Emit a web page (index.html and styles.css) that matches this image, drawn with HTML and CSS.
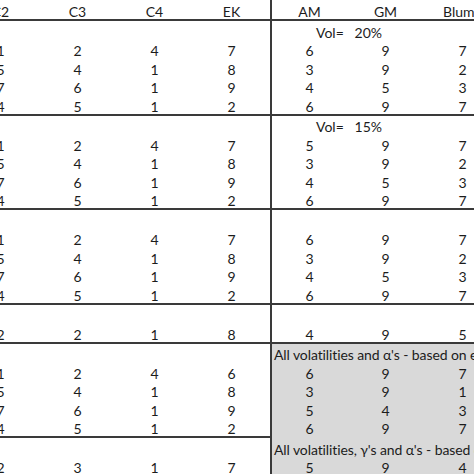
FILE: index.html
```html
<!DOCTYPE html>
<html>
<head>
<meta charset="utf-8">
<link rel="stylesheet" href="styles.css">
</head>
<body>
<div class="sheet">
  <div class="section head">
    <div class="row">
      <div class="c">C2</div><div class="c">C3</div><div class="c">C4</div><div class="c">EK</div>
      <div class="c r">AM</div><div class="c">GM</div><div class="c">Blume</div>
    </div>
  </div>

  <div class="section">
    <div class="row"><div class="c"></div><div class="c"></div><div class="c"></div><div class="c"></div><div class="c r title vol">Vol=   20%</div></div>
    <div class="row"><div class="c">1</div><div class="c">2</div><div class="c">4</div><div class="c">7</div><div class="c r">6</div><div class="c">9</div><div class="c">7</div></div>
    <div class="row"><div class="c">5</div><div class="c">4</div><div class="c">1</div><div class="c">8</div><div class="c r">3</div><div class="c">9</div><div class="c">2</div></div>
    <div class="row"><div class="c">7</div><div class="c">6</div><div class="c">1</div><div class="c">9</div><div class="c r">4</div><div class="c">5</div><div class="c">3</div></div>
    <div class="row"><div class="c">4</div><div class="c">5</div><div class="c">1</div><div class="c">2</div><div class="c r">6</div><div class="c">9</div><div class="c">7</div></div>
  </div>

  <div class="section">
    <div class="row"><div class="c"></div><div class="c"></div><div class="c"></div><div class="c"></div><div class="c r title vol">Vol=   15%</div></div>
    <div class="row"><div class="c">1</div><div class="c">2</div><div class="c">4</div><div class="c">7</div><div class="c r">5</div><div class="c">9</div><div class="c">7</div></div>
    <div class="row"><div class="c">5</div><div class="c">4</div><div class="c">1</div><div class="c">8</div><div class="c r">3</div><div class="c">9</div><div class="c">2</div></div>
    <div class="row"><div class="c">7</div><div class="c">6</div><div class="c">1</div><div class="c">9</div><div class="c r">4</div><div class="c">5</div><div class="c">3</div></div>
    <div class="row"><div class="c">4</div><div class="c">5</div><div class="c">1</div><div class="c">2</div><div class="c r">6</div><div class="c">9</div><div class="c">7</div></div>
  </div>

  <div class="section">
    <div class="row"><div class="c"></div><div class="c"></div><div class="c"></div><div class="c"></div><div class="c r title"></div></div>
    <div class="row"><div class="c">1</div><div class="c">2</div><div class="c">4</div><div class="c">7</div><div class="c r">6</div><div class="c">9</div><div class="c">7</div></div>
    <div class="row"><div class="c">5</div><div class="c">4</div><div class="c">1</div><div class="c">8</div><div class="c r">3</div><div class="c">9</div><div class="c">2</div></div>
    <div class="row"><div class="c">7</div><div class="c">6</div><div class="c">1</div><div class="c">9</div><div class="c r">4</div><div class="c">5</div><div class="c">3</div></div>
    <div class="row"><div class="c">4</div><div class="c">5</div><div class="c">1</div><div class="c">2</div><div class="c r">6</div><div class="c">9</div><div class="c">7</div></div>
  </div>

  <div class="section">
    <div class="row"><div class="c"></div><div class="c"></div><div class="c"></div><div class="c"></div><div class="c r title"></div></div>
    <div class="row"><div class="c">2</div><div class="c">2</div><div class="c">1</div><div class="c">8</div><div class="c r">4</div><div class="c">9</div><div class="c">5</div></div>
  </div>

  <div class="section gray">
    <div class="row"><div class="c"></div><div class="c"></div><div class="c"></div><div class="c"></div><div class="c r title txt">All volatilities and α's - based on estimated parameters</div></div>
    <div class="row"><div class="c">1</div><div class="c">2</div><div class="c">4</div><div class="c">6</div><div class="c r">6</div><div class="c">9</div><div class="c">7</div></div>
    <div class="row"><div class="c">5</div><div class="c">4</div><div class="c">1</div><div class="c">8</div><div class="c r">3</div><div class="c">9</div><div class="c">1</div></div>
    <div class="row"><div class="c">7</div><div class="c">6</div><div class="c">1</div><div class="c">9</div><div class="c r">5</div><div class="c">4</div><div class="c">3</div></div>
    <div class="row"><div class="c">4</div><div class="c">5</div><div class="c">1</div><div class="c">2</div><div class="c r">6</div><div class="c">9</div><div class="c">7</div></div>
  </div>

  <div class="section gray last">
    <div class="row"><div class="c"></div><div class="c"></div><div class="c"></div><div class="c"></div><div class="c r title txt">All volatilities, γ's and α's - based on estimated parameters</div></div>
    <div class="row"><div class="c">2</div><div class="c">3</div><div class="c">1</div><div class="c">7</div><div class="c r">5</div><div class="c">9</div><div class="c">4</div></div>
  </div>
</div>
</body>
</html>
```

FILE: styles.css
```css
html, body {
  margin: 0;
  padding: 0;
  background: #ffffff;
  overflow: hidden;
}
body {
  width: 474px;
  height: 474px;
  font-family: Lato, "Open Sans", sans-serif;
  font-size: 14px;
  color: #1c1c1c;
}
.sheet {
  margin-left: -38px;
  width: 539px;
}
.section {
  border-bottom: 2px solid #3a3a3a;
}
.section.last {
  border-bottom: none;
}
.head .row {
  height: 19px;
}
.row {
  display: grid;
  grid-template-columns: 77px 77px 77px 77px 77px 77px 77px;
  height: 18.5px;
}
.c {
  text-align: center;
  line-height: 18.5px;
  padding-top: 2.5px;
  box-sizing: border-box;
  white-space: pre;
  overflow: visible;
}
.head .c {
  line-height: 16px;
  padding-top: 4px;
}
.r {
  border-left: 2px solid #3a3a3a;
}
.title {
  grid-column: span 3;
  text-align: left;
  overflow: hidden;
}
.vol {
  padding-left: 44px;
}
.txt {
  padding-left: 2px;
  letter-spacing: -0.1px;
}
.gray .r,
.gray .r ~ .c {
  background: #d9d9d9;
}
```
